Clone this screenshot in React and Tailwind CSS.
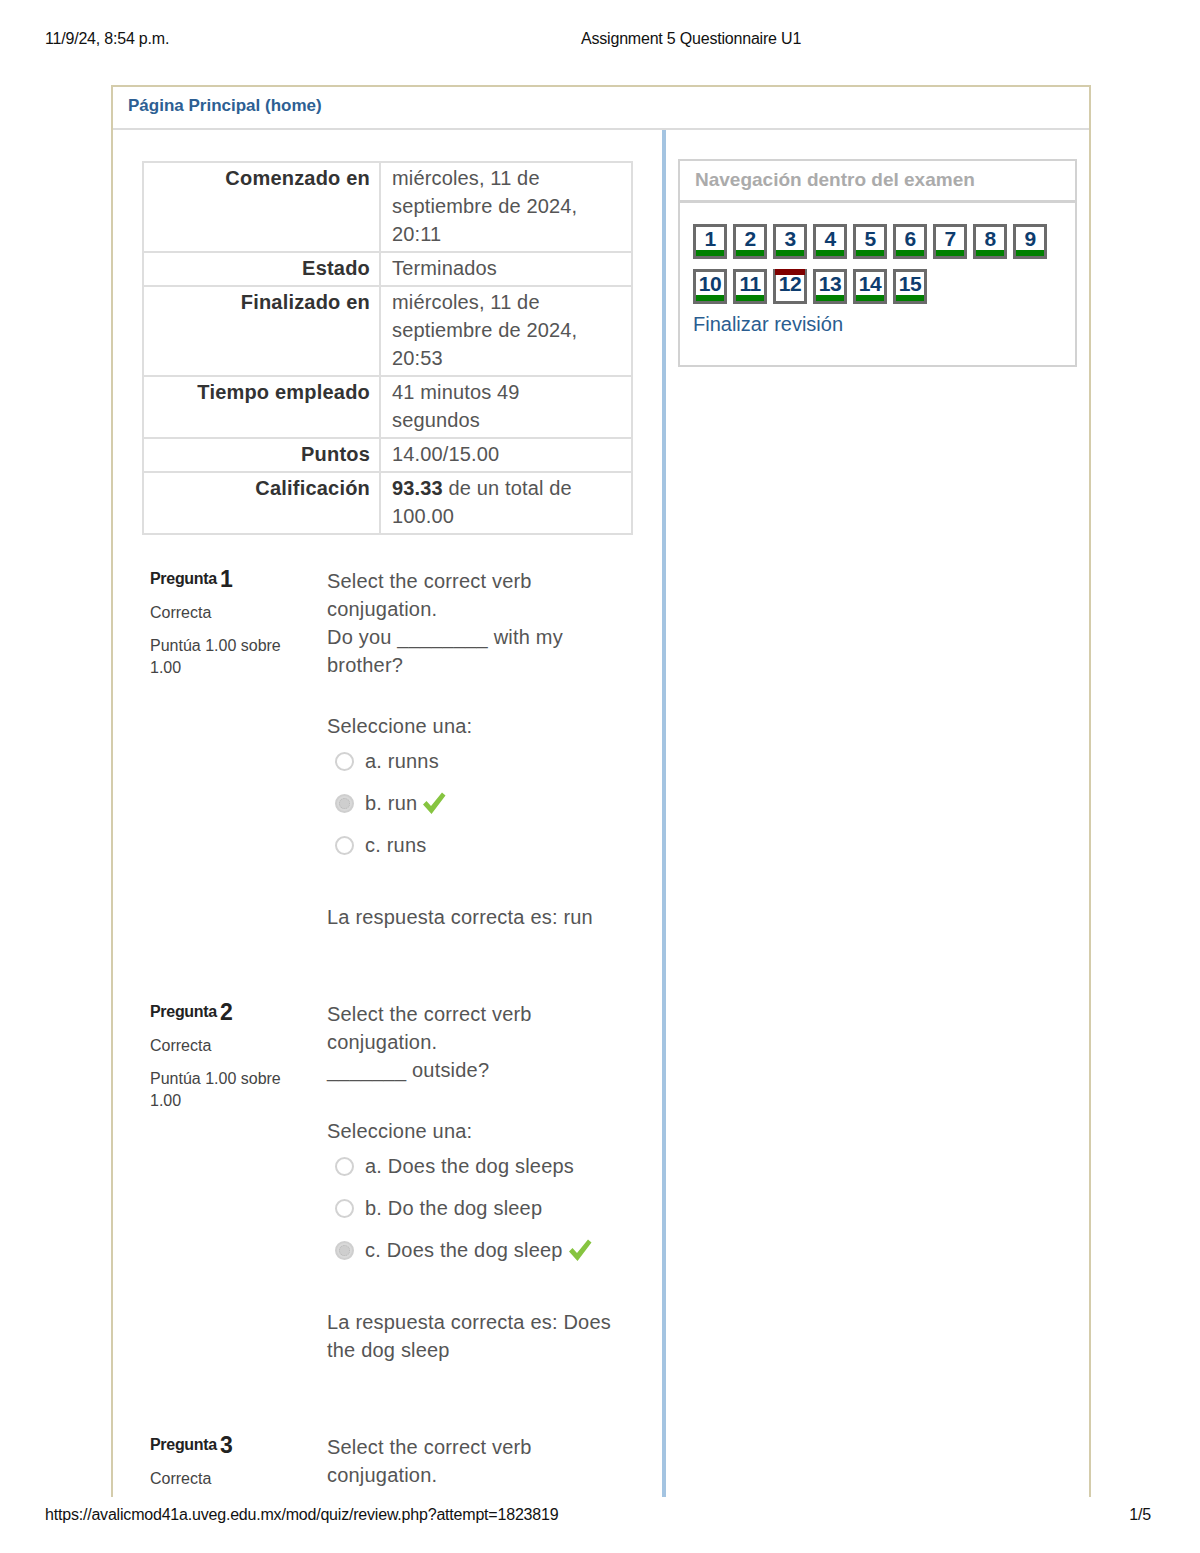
import React from "react";

const F = { fontFamily: '"Liberation Sans", Arial, sans-serif' };

function Check() {
  return (
    <svg width="26" height="26" viewBox="0 0 26 26" className="ml-[4px] inline-block">
      <path d="M2 14.5 L5.5 11 L10 16 L21 2.5 L24.5 5.5 L10.5 24 Z" fill="#86c440" />
    </svg>
  );
}

function Radio({ checked }) {
  return checked ? (
    <span className="w-[19px] h-[19px] rounded-full border-2 border-[#cfcfcf] bg-[#d9d9d9] flex items-center justify-center shrink-0">
      <span className="w-[11px] h-[11px] rounded-full border border-dotted border-[#b8b8b8] bg-[#cecece]" />
    </span>
  ) : (
    <span className="w-[19px] h-[19px] rounded-full border-2 border-[#d2d2d2] bg-white shrink-0" />
  );
}

function Question({ n, lines, options, answer, first, partial }) {
  return (
    <div className={`flex ${first ? "mt-[32px]" : "mt-[69px]"} pl-[8px]`}>
      <div className="w-[150px] shrink-0 text-[16px] text-[#333]">
        <div className="h-[24px] flex items-end leading-[24px]">
          <span className="font-bold text-[#222] tracking-[-0.3px]">Pregunta</span>
          <span className="font-bold text-[23px] text-[#222] ml-[3px] leading-[24px]">{n}</span>
        </div>
        <div className="mt-[10px] leading-[24px] text-[#444]">Correcta</div>
        {!partial && <div className="mt-[10px] leading-[22px] text-[#444]">Puntúa 1.00 sobre 1.00</div>}
      </div>
      <div className="ml-[27px] w-[300px] text-[20px] leading-[28px] text-[#555] tracking-[0.2px]">
        {lines.map((l, i) => (
          <div key={i}>{l}</div>
        ))}
        {!partial && (
          <>
            <div className="mt-[33px]">Seleccione una:</div>
            {options.map((o, i) => (
              <div key={i} className="h-[42px] flex items-center pl-[8px]">
                <Radio checked={o.checked} />
                <span className="ml-[11px] whitespace-nowrap">{o.t}</span>
                {o.checked && <Check />}
              </div>
            ))}
            <div className="mt-[37px]">{answer}</div>
          </>
        )}
      </div>
    </div>
  );
}

const rows = [
  ["Comenzado en", ["miércoles, 11 de", "septiembre de 2024,", "20:11"]],
  ["Estado", ["Terminados"]],
  ["Finalizado en", ["miércoles, 11 de", "septiembre de 2024,", "20:53"]],
  ["Tiempo empleado", ["41 minutos 49", "segundos"]],
  ["Puntos", ["14.00/15.00"]],
];

function NavBtn({ n }) {
  const flagged = n === 12;
  return (
    <div className="relative w-[34px] h-[35px] border-[3px] border-[#6b6b6b] bg-white flex flex-col">
      {flagged && <div className="absolute -top-[3px] -left-[1px] -right-[1px] h-[6px] bg-[#7f0000]" />}
      <div className="flex-1 flex items-center justify-center font-bold text-[21px] text-[#0d3c6e] leading-none tracking-[-0.5px]">
        {n}
      </div>
      <div className={`h-[6px] shrink-0 ${flagged ? "bg-white" : "bg-[#008000]"}`} />
    </div>
  );
}

export default function App() {
  return (
    <div style={F} className="w-[1200px] h-[1553px] bg-white overflow-hidden text-black">
      <div className="h-[85px] flex pt-[29px] text-[16px] leading-[20px] text-[#111] tracking-[-0.2px]">
        <div className="pl-[45px] w-[581px]">11/9/24, 8:54 p.m.</div>
        <div>Assignment 5 Questionnaire U1</div>
      </div>
      <div className="ml-[111px] w-[980px] h-[1412px] border-x-2 border-t-2 border-[#d4ccab] overflow-hidden flex flex-col">
        <div className="h-[43px] border-b-2 border-[#dcdcdc] flex items-center pl-[15px] pb-[3px] shrink-0">
          <span className="font-bold text-[17px] text-[#2d5f93]">Página Principal (home)</span>
        </div>
        <div className="flex flex-1">
          <div className="w-[553px] border-r-4 border-[#a4c4e1] pl-[29px] pr-[25px] pt-[31px]">
            <table className="border-collapse w-[491px] text-[20px] leading-[28px] tracking-[0.15px]">
              <tbody>
                {rows.map(([k, v]) => (
                  <tr key={k}>
                    <td className="w-[237px] border-2 border-[#dedede] text-right align-top pr-[9px] pt-[1px] pb-[3px] font-bold text-[#333] tracking-[0.2px]">
                      {k}
                    </td>
                    <td className="border-2 border-[#dedede] align-top pl-[11px] pt-[1px] pb-[3px] text-[#555]">
                      {v.map((x, i) => (
                        <div key={i}>{x}</div>
                      ))}
                    </td>
                  </tr>
                ))}
                <tr>
                  <td className="w-[237px] border-2 border-[#dedede] text-right align-top pr-[9px] pt-[1px] pb-[3px] font-bold text-[#333] tracking-[0.2px]">
                    Calificación
                  </td>
                  <td className="border-2 border-[#dedede] align-top pl-[11px] pt-[1px] pb-[3px] text-[#555]">
                    <div>
                      <span className="font-bold text-[#333]">93.33</span> de un total de
                    </div>
                    <div>100.00</div>
                  </td>
                </tr>
              </tbody>
            </table>
            <Question
              first
              n="1"
              lines={["Select the correct verb", "conjugation.", "Do you ________ with my", "brother?"]}
              options={[{ t: "a. runns" }, { t: "b. run", checked: true }, { t: "c. runs" }]}
              answer="La respuesta correcta es: run"
            />
            <Question
              n="2"
              lines={["Select the correct verb", "conjugation.", "_______ outside?"]}
              options={[
                { t: "a. Does the dog sleeps" },
                { t: "b. Do the dog sleep" },
                { t: "c. Does the dog sleep", checked: true },
              ]}
              answer={
                <>
                  <div>La respuesta correcta es: Does</div>
                  <div>the dog sleep</div>
                </>
              }
            />
            <Question partial n="3" lines={["Select the correct verb", "conjugation."]} options={[]} answer="" />
          </div>
          <div className="flex-1 pl-[12px] pr-[12px] pt-[29px]">
            <div className="border-2 border-[#d2d2d2]">
              <div className="h-[42px] flex items-center pl-[15px] border-b-[3px] border-[#d2d2d2] font-bold text-[19px] text-[#ababab]">
                Navegación dentro del examen
              </div>
              <div className="pl-[13px] pt-[21px] pb-[27px]">
                <div className="flex gap-[6px]">
                  {[1, 2, 3, 4, 5, 6, 7, 8, 9].map((n) => (
                    <NavBtn key={n} n={n} />
                  ))}
                </div>
                <div className="flex gap-[6px] mt-[10px]">
                  {[10, 11, 12, 13, 14, 15].map((n) => (
                    <NavBtn key={n} n={n} />
                  ))}
                </div>
                <div className="mt-[6px] text-[20px] leading-[28px] text-[#2a5d90]">Finalizar revisión</div>
              </div>
            </div>
          </div>
        </div>
      </div>
      <div className="flex pt-[8px] text-[16px] leading-[20px] text-[#111] tracking-[-0.2px]">
        <div className="pl-[45px] flex-1">https://avalicmod41a.uveg.edu.mx/mod/quiz/review.php?attempt=1823819</div>
        <div className="pr-[49px]">1/5</div>
      </div>
    </div>
  );
}
